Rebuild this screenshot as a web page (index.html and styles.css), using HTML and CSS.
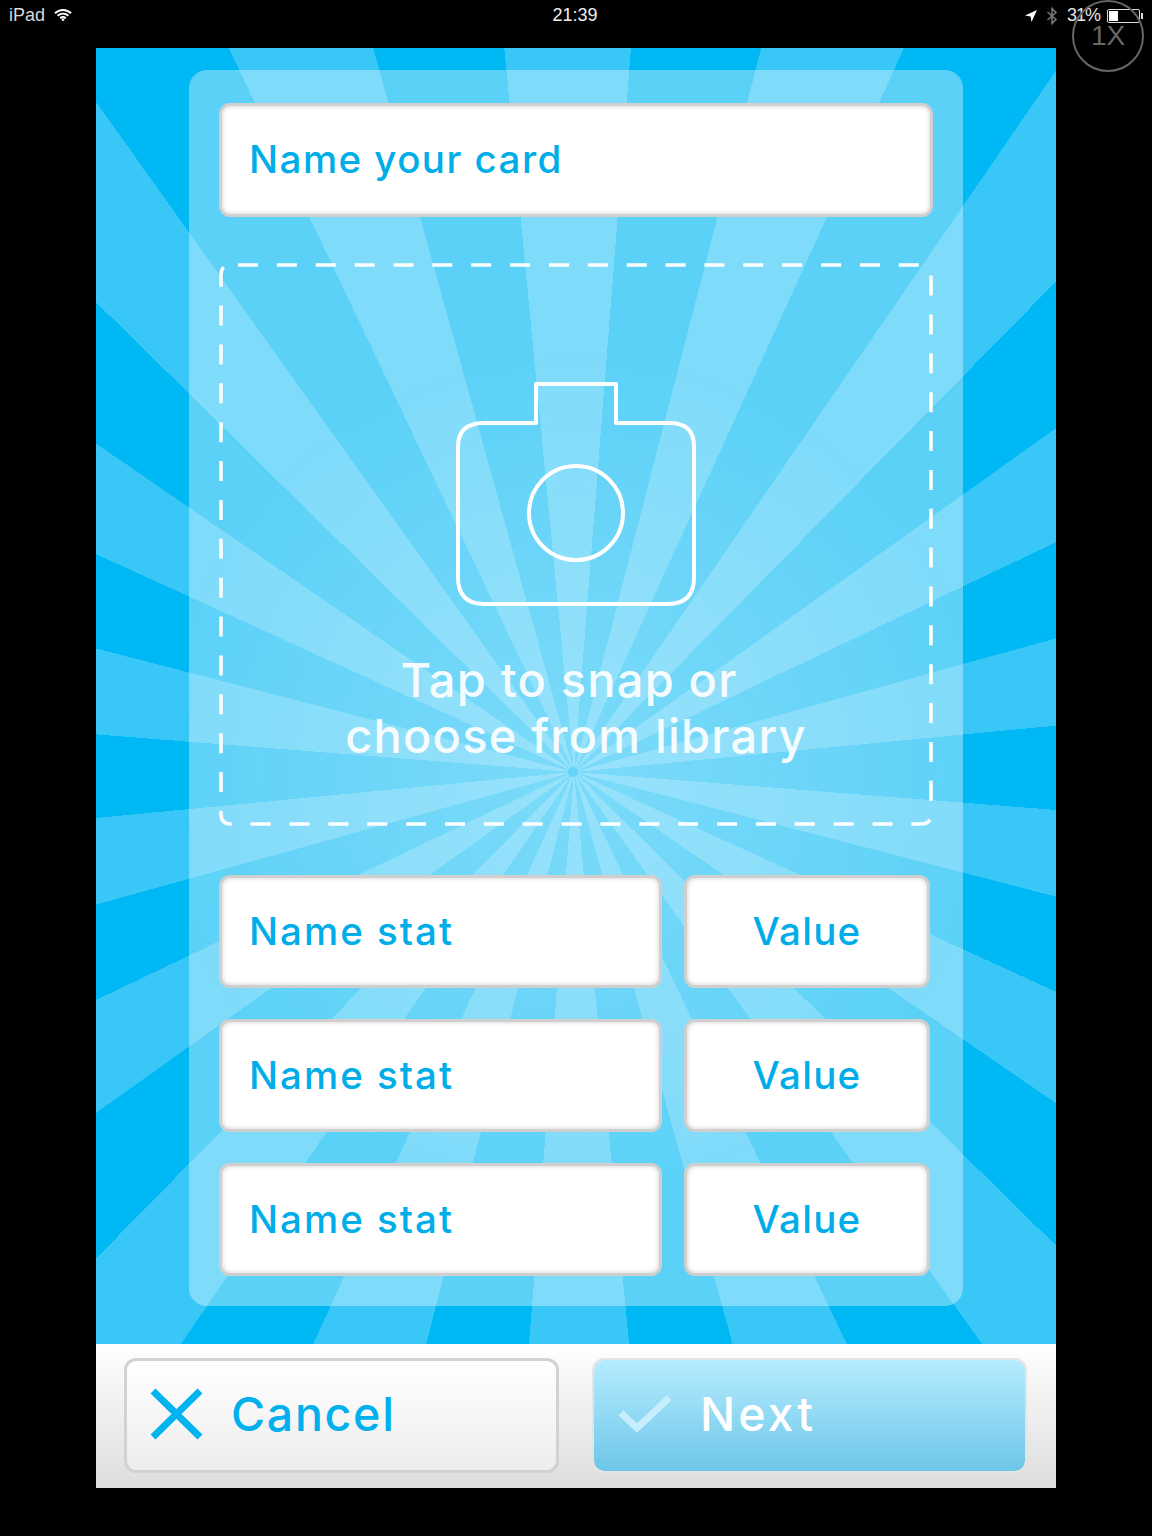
FILE: index.html
```html
<!DOCTYPE html>
<html lang="en">
<head>
<meta charset="utf-8">
<title>Name your card</title>
<link rel="stylesheet" href="styles.css">
</head>
<body>
<header class="status">
  <div class="status-left">
    <span>iPad</span>
    <svg class="wifi" viewBox="0 0 18 14"><path d="M1 5.2C5.6 .8 12.4 .8 17 5.2M3.6 7.8C6.8 4.9 11.2 4.9 14.4 7.8M6.2 10.3C8 8.8 10 8.8 11.8 10.3" fill="none" stroke="#fff" stroke-width="2"/><path d="M7.4 11.6L9 10.6L10.6 11.6L9 13.6Z" fill="#fff"/></svg>
  </div>
  <div class="status-time">21:39</div>
  <div class="status-right">
    <svg class="loc" viewBox="0 0 14 14"><path d="M13 1L1 6.5L6.6 7.4L7.5 13Z" fill="#fff"/></svg>
    <svg class="bt" viewBox="0 0 12 18"><path d="M1.5 5L10 12.5L6 16.5V1.5L10 5.5L1.5 13" fill="none" stroke="#777" stroke-width="1.6"/></svg>
    <span class="pct">31%</span>
    <div class="battery"><div class="battery-fill"></div></div>
  </div>
  <div class="zoom-badge">1X</div>
</header>

<main class="frame">
  <section class="art">
    <div class="panel">
      <div class="field field-title">Name your card</div>
      <div class="drop">
        <svg class="dash" viewBox="0 0 716 565"><path d="M20 3H703Q713 3 713 13V552Q713 562 703 562H13Q3 562 3 552V13Q3 3 13 3H20" fill="none" stroke="#fff" stroke-width="3.5" stroke-dasharray="20 18.87"/></svg>
        <svg class="camera" viewBox="0 0 242 226"><path d="M80 42V3H160V42H214Q238 42 238 66V196Q238 223 212 223H28Q2 223 2 196V66Q2 42 28 42Z" fill="none" stroke="#fff" stroke-width="4" stroke-linejoin="round"/><circle cx="120" cy="132" r="47" fill="none" stroke="#fff" stroke-width="4"/></svg>
        <p class="drop-text"><span class="line-one">Tap to snap or</span><br>choose from library</p>
        <div class="burst-dot"></div>
      </div>
      <div class="stats">
        <div class="stat"><div class="field field-name">Name stat</div><div class="field field-value">Value</div></div>
        <div class="stat"><div class="field field-name">Name stat</div><div class="field field-value">Value</div></div>
        <div class="stat"><div class="field field-name">Name stat</div><div class="field field-value">Value</div></div>
      </div>
    </div>
  </section>
  <footer class="actions">
    <div class="btn btn-cancel">
      <svg class="btn-icon" viewBox="0 0 53 52"><path d="M3 3L50 49M50 3L3 49" fill="none" stroke="#00b4f0" stroke-width="7"/></svg>
      <span>Cancel</span>
    </div>
    <div class="btn btn-next">
      <svg class="btn-icon" viewBox="0 0 54 38"><path d="M3 18L19 33L51 3" fill="none" stroke="#c6eefc" stroke-width="7"/></svg>
      <span>Next</span>
    </div>
  </footer>
</main>
</body>
</html>
```
FILE: styles.css
```css
* { box-sizing: border-box; }
html, body { margin: 0; background: #000; }
body { width: 1152px; height: 1536px; overflow: hidden; font-family: Inter, "Liberation Sans", sans-serif; }

.status { position: relative; height: 48px; display: grid; grid-template-columns: 1fr auto 1fr; align-items: start; padding: 5px 11px 0 9px; color: #e4e4e4; font-family: "Liberation Sans", sans-serif; font-size: 18px; line-height: 21px; }
.status-left { display: flex; align-items: center; gap: 9px; color: #d8d8d8; }
.wifi { width: 18px; height: 14px; margin-top: -2px; }
.status-time { color: #eee; font-size: 18px; }
.status-right { display: flex; justify-content: flex-end; align-items: center; }
.loc { width: 14px; height: 14px; margin-right: 8px; }
.bt { width: 12px; height: 18px; margin-right: 9px; }
.pct { margin-right: 7px; letter-spacing: -1px; }
.battery { position: relative; width: 33px; height: 14px; margin-right: 1px; border: 1px solid #ddd; padding: 1px; border-radius: 2px; }
.battery::after { content: ""; position: absolute; right: -4px; top: 3px; width: 2px; height: 6px; background: #ddd; }
.battery-fill { width: 31%; height: 100%; background: #fff; }
.zoom-badge { position: absolute; left: 1072px; top: 0; width: 72px; height: 72px; border: 2px solid #666; border-radius: 50%; color: #666; font-size: 28px; line-height: 68px; text-align: center; }

.frame { width: 960px; height: 1440px; margin: 0 96px; }
.art { height: 1296px; padding: 22px 93px 0; background: repeating-conic-gradient(from -5.5deg at 478px 724px, #38c7f7 0 10deg, #00b8f4 10deg 20deg); }

.panel { height: 1236px; padding: 33px 30px 0; border-radius: 18px; background: radial-gradient(circle at 385px 702px, rgba(255,255,255,.2), rgba(255,255,255,0) 420px), rgba(255,255,255,.36); }

.field { display: flex; align-items: center; height: 114px; padding-bottom: 2px; background: #fff; border: 3px solid #cfcfcf; border-radius: 11px; box-shadow: inset 0 0 5px rgba(0,0,0,.2); color: #00ade9; font-size: 38.5px; font-weight: 500; letter-spacing: 1.3px; }
.field-title { padding-left: 27px; letter-spacing: 1.45px; }

.drop { position: relative; height: 563px; margin-top: 46px; padding-top: 118px; text-align: center; }
.dash { position: absolute; left: -1px; top: -1px; width: 716px; height: 565px; }
.camera { display: block; width: 242px; height: 226px; margin-left: 237px; }
.drop-text { position: relative; margin: 45px 0 0; color: #fff; font-size: 47px; line-height: 56px; font-weight: 500; letter-spacing: 1.2px; opacity: .92; }
.line-one { padding-right: 14px; }
.burst-dot { position: absolute; left: 349px; top: 504px; width: 10px; height: 10px; border-radius: 50%; background: #63d3f8; }

.stats { display: flex; flex-direction: column; gap: 31px; margin-top: 49px; padding-right: 3px; }
.stat { display: flex; gap: 22px; }
.stat .field { height: 113px; }
.stat .field-name { width: 443px; padding-left: 27px; letter-spacing: 2px; }
.field-value { width: 246px; justify-content: center; }

.actions { display: flex; gap: 33px; height: 144px; padding: 14px 28px 0; background: linear-gradient(#fff, #dddddd); }
.btn { display: flex; align-items: center; width: 435px; height: 115px; padding-bottom: 3px; border-radius: 12px; font-size: 46.5px; letter-spacing: 1.7px; font-weight: 500; }
.btn-cancel { padding-left: 23px; gap: 28px; border: 3px solid #d2d2d2; background: linear-gradient(#fff, #ededed); color: #00b0ec; }
.btn-cancel .btn-icon { width: 53px; height: 52px; }
.btn-next { padding-left: 24px; gap: 28px; border: 2px solid #e4e4e4; background: linear-gradient(#b6ecff, #6dc6e8); background-clip: padding-box; color: #fff; letter-spacing: 3px; }
.btn-next .btn-icon { width: 54px; height: 38px; }
```
